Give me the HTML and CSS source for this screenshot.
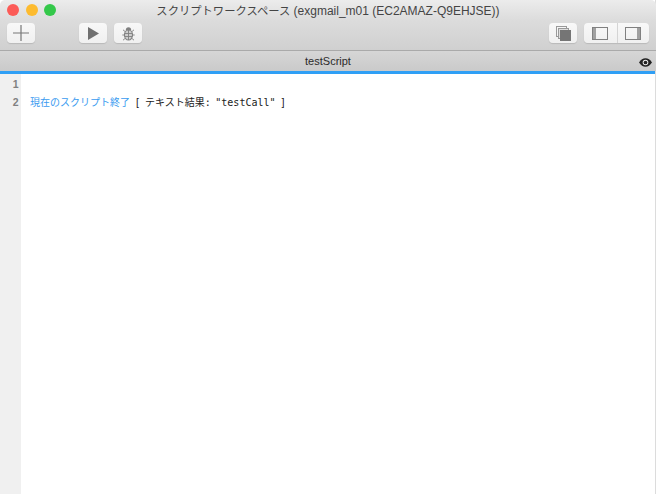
FILE: index.html
```html
<!DOCTYPE html>
<html lang="ja">
<head>
<meta charset="utf-8">
<title>スクリプトワークスペース</title>
<link rel="stylesheet" href="styles.css">
</head>
<body>
<div class="window">
  <header class="chrome">
    <div class="titlebar">
      <div class="lights">
        <span class="light red"></span>
        <span class="light yellow"></span>
        <span class="light green"></span>
      </div>
      <div class="title"><span class="title-ja">スクリプトワークスペース</span> (exgmail_m01 (EC2AMAZ-Q9EHJSE))</div>
    </div>
    <div class="toolbar">
      <button class="btn">
        <svg width="16" height="16" viewBox="0 0 16 16"><path d="M8 0v16M0 8h16" stroke="#777" stroke-width="1.200" fill="none"/></svg>
      </button>
      <div class="run-group">
        <button class="btn">
          <svg width="12" height="13" viewBox="0 0 12 13"><path d="M1 0l11 6.500L1 13z" fill="#707070"/></svg>
        </button>
        <button class="btn">
          <svg width="13" height="15" viewBox="0 0 13 15"><path d="M3.800 4.200a2.700 3 0 0 1 5.400 0z" fill="#808080"/><ellipse cx="6.500" cy="9" rx="4" ry="5" fill="#cfcfcf" stroke="#808080" stroke-width="1.100"/><path d="M6.500 4v10M2.700 7.500h7.600M2.700 10.500h7.600M3 5.500L1 3.800M10 5.500l2-1.700M2.500 9H.3M10.500 9h2.200M3 12.500l-2 1.700M10 12.500l2 1.700" stroke="#808080" fill="none" stroke-width=".9"/></svg>
        </button>
      </div>
      <div class="spacer"></div>
      <button class="btn">
        <svg width="15" height="15" viewBox="0 0 15 15"><rect x=".5" y=".5" width="10" height="10" fill="none" stroke="#999"/><rect x="2.500" y="2.500" width="10" height="10" fill="#ddd" stroke="#999"/><rect x="4" y="4" width="11" height="11" fill="#757575"/></svg>
      </button>
      <div class="segmented">
        <button class="seg">
          <svg width="16" height="13" viewBox="0 0 16 13"><rect x=".5" y=".5" width="15" height="12" fill="none" stroke="#808080"/><rect x="1" y="1" width="3" height="11" fill="#a0a0a0"/></svg>
        </button>
        <button class="seg">
          <svg width="16" height="13" viewBox="0 0 16 13"><rect x=".5" y=".5" width="15" height="12" fill="none" stroke="#808080"/><rect x="12" y="1" width="3" height="11" fill="#a0a0a0"/></svg>
        </button>
      </div>
    </div>
  </header>
  <div class="tabbar">
    <span class="tab-name">testScript</span>
    <svg class="eye" width="13" height="9" viewBox="0 0 14 9"><path d="M0 4.500C2 1.500 4.300 0 7 0s5 1.500 7 4.500C12 7.500 9.700 9 7 9S2 7.500 0 4.500z" fill="#222"/><circle cx="7" cy="4.500" r="3" fill="#eee"/><circle cx="7" cy="4.500" r="2" fill="#222"/></svg>
  </div>
  <main class="editor">
    <div class="gutter">
      <div class="num first">1</div>
      <div class="num">2</div>
    </div>
    <div class="code">
      <div class="line first"></div>
      <div class="line"><span class="kw">現在のスクリプト終了</span> [ テキスト結果: "testCall" ]</div>
    </div>
  </main>
</div>
</body>
</html>
```
FILE: styles.css
```css
* {
  box-sizing: border-box;
}
html, body {
  margin: 0;
  height: 100%;
  background: #fff;
}
body {
  overflow: hidden;
}
.window {
  width: 656px;
  height: 494px;
  display: flex;
  flex-direction: column;
  font-family: "Liberation Sans", "Noto Sans CJK JP", sans-serif;
  border-right: 1px solid #dcdcdc;
}
.chrome {
  height: 51px;
  flex: none;
  margin-right: -1px;
  border-radius: 5px 5px 0 0;
  background: linear-gradient(#ececec, #dcdcdc 40%, #d0d0d0);
  border-bottom: 1px solid #aaa;
}
.titlebar {
  height: 21px;
  position: relative;
  display: flex;
  align-items: center;
  justify-content: center;
}
.lights {
  position: absolute;
  left: 7px;
  top: 4px;
  display: flex;
  gap: 6.500px;
}
.light {
  width: 12px;
  height: 12px;
  border-radius: 50%;
}
.red { background: #fc5b57; }
.yellow { background: #fdbb2f; }
.green { background: #34c84a; }
.title {
  font-size: 12px;
  color: #444;
  white-space: nowrap;
  margin-top: -1px;
}
.title-ja {
  font-size: 11.300px;
}
.toolbar {
  display: flex;
  align-items: flex-start;
  padding: 2px 7px 0;
}
.run-group {
  display: flex;
  gap: 7px;
  margin-left: 44px;
}
.spacer {
  flex: 1;
}
.btn, .seg {
  height: 20px;
  padding: 0;
  border: none;
  background: linear-gradient(#f8f8f8, #f0f0f0);
  display: flex;
  align-items: center;
  justify-content: center;
}
.btn {
  width: 28px;
  border-radius: 4px;
  box-shadow: 0 1px 1px rgba(0, 0, 0, .12);
}
.segmented {
  display: flex;
  margin-left: 7px;
  border-radius: 4px;
  overflow: hidden;
  box-shadow: 0 1px 1px rgba(0, 0, 0, .12);
}
.seg {
  width: 32.500px;
}
.seg + .seg {
  border-left: 1px solid #d4d4d4;
}
.tabbar {
  height: 20px;
  flex: none;
  margin-right: -1px;
  position: relative;
  display: flex;
  align-items: center;
  justify-content: center;
  background: linear-gradient(#d6d6d6, #cacaca);
}
.tab-name {
  font-size: 11px;
  color: #2b2b2b;
}
.eye {
  position: absolute;
  right: 4px;
  top: 7px;
}
.editor {
  flex: 1;
  display: flex;
  border-top: 3px solid #2f9ff5;
}
.gutter {
  width: 21px;
  flex: none;
  background: #f0f0f0;
  padding-top: 1px;
}
.num {
  height: 19px;
  padding-right: 2.500px;
  text-align: right;
  font: bold 10.500px/16px "Liberation Sans", sans-serif;
  color: #808080;
}
.num.first {
  padding-top: 1px;
}
.code {
  flex: 1;
  padding: 1px 0 0 9px;
  font-family: "DejaVu Sans Mono", "Noto Sans CJK JP", monospace;
  font-size: 10px;
  color: #222;
  word-spacing: -1.500px;
}
.line {
  height: 20px;
  line-height: 16px;
  white-space: pre;
}
.kw {
  color: #3a9bf0;
}
```
